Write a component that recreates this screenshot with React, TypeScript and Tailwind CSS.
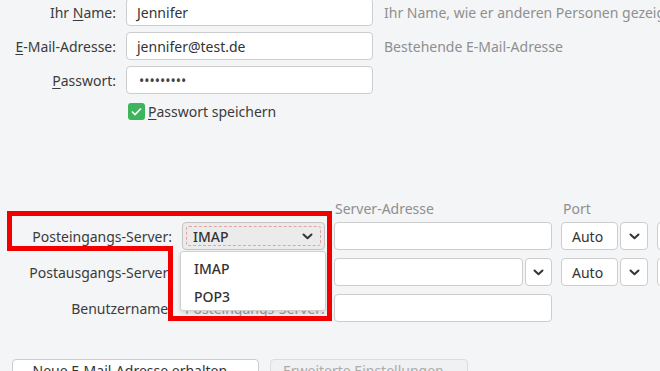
import type { ReactNode } from "react";

function Chevron() {
  return (
    <svg width="11" height="7" viewBox="0 0 11 7" fill="none">
      <path d="M1.5 1.5 L5.5 5.2 L9.5 1.5" stroke="#333" strokeWidth="2" strokeLinecap="round" strokeLinejoin="round" />
    </svg>
  );
}

function Input({ children, className = "" }: { children?: ReactNode; className?: string }) {
  return (
    <div
      className={`flex h-[28px] items-center rounded-[4px] border border-[#cdcdcd] bg-white px-[10px] text-[#333] ${className}`}
    >
      {children}
    </div>
  );
}

function ChevronButton({ className = "" }: { className?: string }) {
  return (
    <div
      className={`flex h-[28px] items-center justify-center rounded-[4px] border border-[#cdcdcd] bg-white ${className}`}
    >
      <Chevron />
    </div>
  );
}

function Port() {
  return (
    <div className="flex gap-[2px]">
      <Input className="w-[58px] px-[8px]">Auto</Input>
      <ChevronButton className="w-[28px]" />
    </div>
  );
}

export default function App() {
  return (
    <div className="relative h-[371px] w-[660px] overflow-hidden bg-[#f4f5f6] font-['Noto_Sans',sans-serif] text-[14px] text-[#3b3b3b]">
      {/* identity */}
      <div className="-mt-[2px] grid grid-cols-[116px_247px_1fr] items-center gap-x-[10px] gap-y-[6px]">
        <div className="text-right">
          Ihr <u className="underline-offset-2">N</u>ame:
        </div>
        <Input>Jennifer</Input>
        <div className="overflow-hidden whitespace-nowrap pl-px text-[#8f8f8f]">
          Ihr Name, wie er anderen Personen gezeigt wird
        </div>

        <div className="whitespace-nowrap text-right">
          <u className="underline-offset-2">E</u>-Mail-Adresse:
        </div>
        <Input>jennifer@test.de</Input>
        <div className="whitespace-nowrap pl-px text-[#8f8f8f]">Bestehende E-Mail-Adresse</div>

        <div className="text-right">
          <u className="underline-offset-2">P</u>asswort:
        </div>
        <Input className="pl-[12px] text-[14px] text-[#444]">•••••••••</Input>
        <div />
      </div>

      <div className="mt-[9px] flex h-[17px] items-center gap-[3px] pl-[128px]">
        <div className="flex h-[17px] w-[17px] items-center justify-center rounded-[3px] bg-[#3db55c]">
          <svg width="11" height="9" viewBox="0 0 11 9" fill="none">
            <path d="M1 4.5 L4 7.5 L10 1.5" stroke="#fff" strokeWidth="1.6" />
          </svg>
        </div>
        <div>
          <u className="underline-offset-2">P</u>asswort speichern
        </div>
      </div>

      {/* server settings */}
      <div className="mt-[78px] grid h-[20px] grid-cols-[173px_143px_218px_87px_1fr] items-center gap-x-[9px] text-[#8f8f8f]">
        <div />
        <div />
        <div className="pl-px">Server-Adresse</div>
        <div className="pl-[2px]">Port</div>
        <div />
      </div>

      <div className="mt-[4px] grid grid-cols-[173px_143px_218px_87px_1fr] items-center gap-x-[9px] gap-y-[8px]">
        <div className="whitespace-nowrap pr-px text-right">Posteingangs-Server:</div>
        <div className="relative">
          <div className="flex h-[28px] items-center rounded-[4px] border border-[#c4c4c4] bg-[#ebebeb] p-[3px]">
            <div className="flex h-full w-full items-center justify-between rounded-[3px] border border-dashed border-[#e4a3a3] pl-[6px] pr-[7px] font-medium text-[#333]">
              <span>IMAP</span>
              <Chevron />
            </div>
          </div>
          <div className="absolute left-[-2px] top-[29px] z-10 h-[60px] w-[146px] rounded-[3px] border border-[#cfcfcf] bg-white pt-[2px] shadow-[0_2px_4px_rgba(0,0,0,0.15)]">
            <div className="flex h-[28px] items-center pl-[13px] font-medium text-[#333]">IMAP</div>
            <div className="flex h-[28px] items-center pl-[13px] font-medium text-[#333]">POP3</div>
          </div>
        </div>
        <Input />
        <Port />
        <Input className="w-[40px]" />

        <div className="whitespace-nowrap pr-px text-right">Postausgangs-Server:</div>
        <div />
        <div className="flex gap-[2px]">
          <Input className="flex-1" />
          <ChevronButton className="w-[27px]" />
        </div>
        <Port />
        <Input className="w-[40px]" />

        <div className="whitespace-nowrap pr-px text-right">Benutzername:</div>
        <div className="whitespace-nowrap pl-[3px] text-[#9c9c9c]">Posteingangs-Server:</div>
        <Input />
        <div />
        <div />
      </div>

      <div className="mt-[37px] flex gap-[11px] pl-[12px]">
        <div className="h-[30px] w-[247px] rounded-[4px] border border-[#cdcdcd] bg-white pt-[1px] text-center leading-[20px] text-[#333]">
          Neue E-Mail-Adresse erhalten...
        </div>
        <div className="h-[30px] w-[198px] rounded-[4px] border border-[#dcdcdc] bg-[#f0f1f2] pt-[1px] text-center leading-[20px] text-[#ababab]">
          Erweiterte Einstellungen...
        </div>
      </div>

      {/* annotation */}
      <svg className="pointer-events-none absolute left-0 top-0 z-20" width="660" height="371">
        <polygon
          points="9.5,213.5 329.5,213.5 329.5,318.5 170.5,318.5 170.5,248.5 9.5,248.5"
          fill="none"
          stroke="#f20000"
          strokeWidth="5"
        />
      </svg>
    </div>
  );
}
